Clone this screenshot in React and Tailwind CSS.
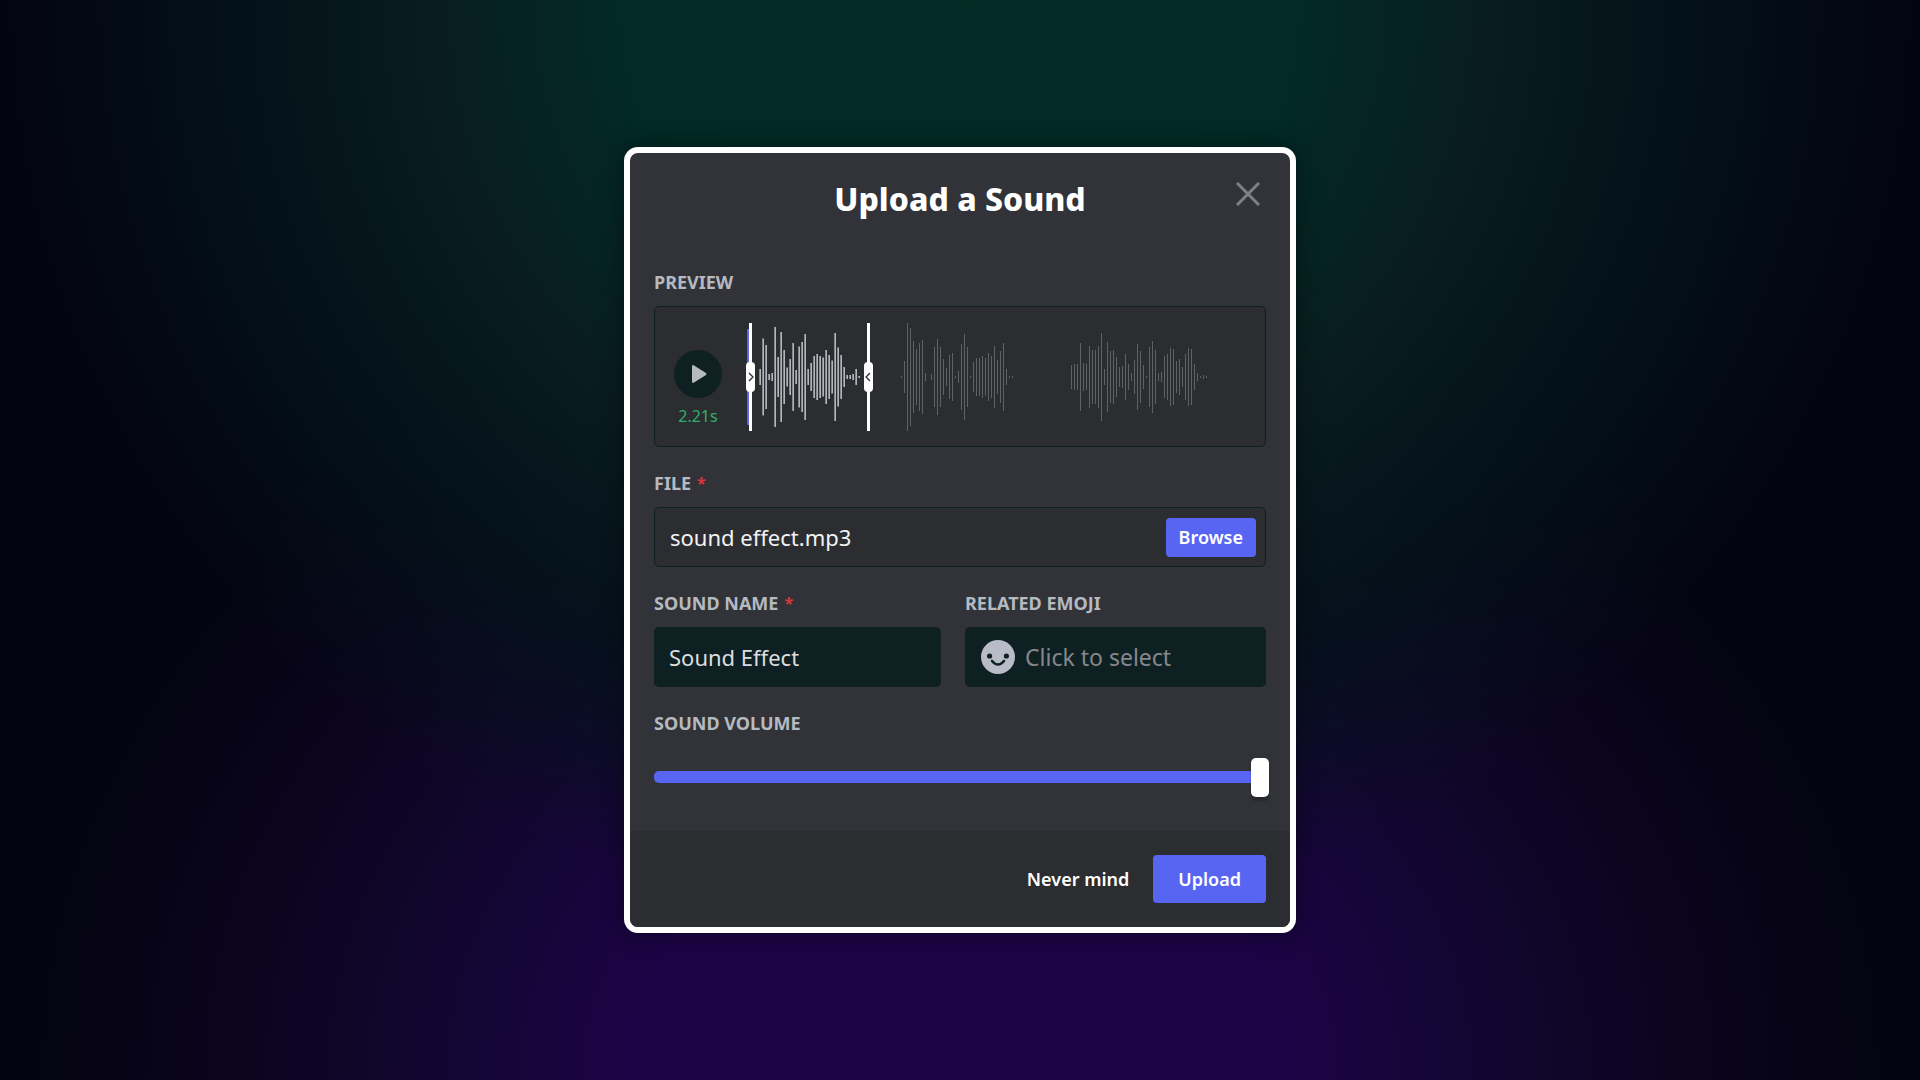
import { useState } from "react";

const SELECTED = [16, 77, 64, 6, 8, 100, 40, 90, 54, 19, 36, 68, 14, 61, 70, 86, 16, 28, 42, 46, 42, 39, 54, 44, 33, 88, 59, 44, 20, 4, 4, 6, 16, 2];
const MIDDLE = [2, 32, 108, 98, 72, 56, 68, 74, 8, 0, 6, 60, 76, 60, 36, 18, 44, 48, 2, 12, 66, 86, 60, 2, 30, 38, 38, 42, 38, 48, 42, 62, 34, 52, 68, 16, 2, 2];
const LAST = [24, 26, 26, 68, 28, 26, 62, 54, 54, 62, 88, 16, 70, 52, 54, 40, 20, 22, 46, 26, 8, 34, 66, 52, 24, 2, 60, 72, 54, 8, 10, 42, 46, 58, 56, 32, 36, 20, 46, 58, 56, 26, 8, 2, 4, 2];

function Bars({ heights, start, className }) {
  return (
    <g className={className}>
      {heights.map((h, i) => (
        <rect key={i} x={start + i * 3} y={54 - h / 2} width={1} height={h} />
      ))}
    </g>
  );
}

function Waveform() {
  return (
    <svg viewBox="0 0 500 108" className="min-w-0 flex-1" role="img" aria-label="Sound waveform">
      <rect x="1" y="6" width="3" height="96" rx="1" className="fill-[#5865f2]" />
      <Bars heights={SELECTED} start={13} className="fill-[#85878d]" />
      <Bars heights={SELECTED} start={14} className="fill-[#b2b5bb]" />
      <Bars heights={MIDDLE} start={155} className="fill-[#606165]" />
      <Bars heights={LAST} start={325} className="fill-[#606165]" />
      <g className="fill-white">
        <rect x="3" y="0" width="3" height="108" />
        <rect x="0" y="39" width="9" height="30" rx="4" />
        <rect x="121" y="0" width="3" height="108" />
        <rect x="118" y="39" width="9" height="30" rx="4" />
      </g>
      <g className="fill-none stroke-[#2b2d31]" strokeWidth="1.3">
        <path d="M3 50 L7 54 L3 58" />
        <path d="M124 50 L120 54 L124 58" />
      </g>
    </svg>
  );
}

function Label({ children, required, htmlFor }) {
  return (
    <label htmlFor={htmlFor} className="mb-3 flex gap-1.5 text-lg leading-6 font-bold text-[#b5bac1] uppercase">
      {children}
      {required && <span className="text-base leading-6 text-[#da373c]">*</span>}
    </label>
  );
}

export default function App() {
  const [name, setName] = useState("Sound Effect");
  const [volume, setVolume] = useState(100);

  return (
    <main className="flex min-h-screen items-center justify-center bg-[#03040f] bg-[radial-gradient(ellipse_50%_86%_at_50%_0%,#022b26_0%,#022a26_35%,#091e20f0_55%,#03141ad0_76%,#02081000_100%),radial-gradient(ellipse_50%_76%_at_50%_100%,#1d0446_0%,#1c0446_34%,#10062a_62%,#0a041c_78%,#03040f00_100%)] p-6 font-['Noto_Sans',sans-serif]">
      <form className="w-full max-w-[672px] overflow-hidden rounded-[14px] border-6 border-white bg-[#313338] shadow-[0_0_24px_rgba(0,0,0,0.45)]" onSubmit={(e) => e.preventDefault()}>
        <header className="relative px-6 pt-6 pb-[49px] text-center">
          <h1 className="text-[32px] leading-[44px] font-extrabold text-white">Upload a Sound</h1>
          <button type="button" aria-label="Close" className="absolute top-[29px] right-[30px]">
            <svg viewBox="0 0 24 24" className="size-6 fill-none stroke-[#808186]" strokeWidth="3">
              <path d="M1 1 L23 23 M23 1 L1 23" />
            </svg>
          </button>
        </header>

        <div className="space-y-6 px-6 pb-12">
          <section>
            <h2 className="mb-3 text-lg leading-6 font-bold text-[#b5bac1] uppercase">Preview</h2>
            <div className="flex gap-6 rounded-[5px] border border-[#0c2022] bg-[#2b2d31] pt-4 pr-[19px] pb-[15px] pl-[19px]">
              <div className="flex w-12 flex-col items-center pt-[27px]">
                <button type="button" aria-label="Play" className="flex size-12 items-center justify-center rounded-full bg-[#0e2022]">
                  <svg viewBox="0 0 24 24" className="size-6 fill-[#b5bac1]">
                    <path d="M6 4.5 Q6 2.5 8 3.4 L20 11 Q21 12 20 13 L8 20.6 Q6 21.5 6 19.5 Z" />
                  </svg>
                </button>
                <span className="mt-1.5 text-base leading-6 text-[#2fb067]">2.21s</span>
              </div>
              <Waveform />
            </div>
          </section>

          <section>
            <Label htmlFor="file" required>File</Label>
            <div className="flex h-[60px] items-center justify-between rounded-[5px] border border-[#0c2022] bg-[#2b2d31] pr-[9px] pl-[15px]">
              <input id="file" readOnly defaultValue="sound effect.mp3" className="min-w-0 flex-1 bg-transparent text-[22px] text-[#f2f3f5] outline-none" />
              <button type="button" className="h-[39px] rounded-[4px] bg-[#5865f2] px-[13px] text-lg font-semibold text-white">Browse</button>
            </div>
          </section>

          <div className="grid grid-cols-[287fr_301fr] gap-6">
            <div>
              <Label htmlFor="name" required>Sound name</Label>
              <input id="name" value={name} onChange={(e) => setName(e.target.value)} className="h-[60px] w-full rounded-[5px] bg-[#0e2022] px-[15px] text-[22px] text-[#dbdee1] outline-none" />
            </div>
            <div>
              <Label htmlFor="emoji">Related emoji</Label>
              <button id="emoji" type="button" className="flex h-[60px] w-full items-center gap-2.5 rounded-[5px] bg-[#0e2022] px-4 text-[23px] text-[#85878c]">
                <svg viewBox="0 0 34 34" className="size-[34px]" aria-hidden="true">
                  <circle cx="17" cy="17" r="17" className="fill-[#b9bcc7]" />
                  <circle cx="8.6" cy="16" r="2.6" className="fill-[#0e2022]" />
                  <circle cx="25.4" cy="16" r="2.6" className="fill-[#0e2022]" />
                  <path d="M11 21 Q17 28 23 21" className="fill-none stroke-[#0e2022]" strokeWidth="2.6" strokeLinecap="round" />
                </svg>
                Click to select
              </button>
            </div>
          </div>

          <div>
            <Label htmlFor="volume">Sound volume</Label>
            <input
              id="volume"
              type="range"
              min="0"
              max="100"
              value={volume}
              onChange={(e) => setVolume(Number(e.target.value))}
              style={{ backgroundImage: `linear-gradient(to right, #5865f2 ${volume}%, #4e5058 ${volume}%)` }}
              className="mt-9 block h-3 w-[calc(100%+3px)] cursor-pointer appearance-none rounded-[5px] outline-none [&::-webkit-slider-runnable-track]:h-3 [&::-webkit-slider-thumb]:-mt-[13px] [&::-webkit-slider-thumb]:h-[39px] [&::-webkit-slider-thumb]:w-[18px] [&::-webkit-slider-thumb]:appearance-none [&::-webkit-slider-thumb]:rounded-[5px] [&::-webkit-slider-thumb]:bg-white [&::-webkit-slider-thumb]:shadow-[0_4px_2px_rgba(0,0,0,0.2)]"
            />
          </div>
        </div>

        <footer className="flex items-center justify-end gap-6 bg-[#2b2d31] p-6">
          <button type="button" className="text-lg font-semibold text-white">Never mind</button>
          <button type="submit" className="h-12 rounded-[4px] bg-[#5865f2] px-[25px] text-lg font-semibold text-white">Upload</button>
        </footer>
      </form>
    </main>
  );
}
